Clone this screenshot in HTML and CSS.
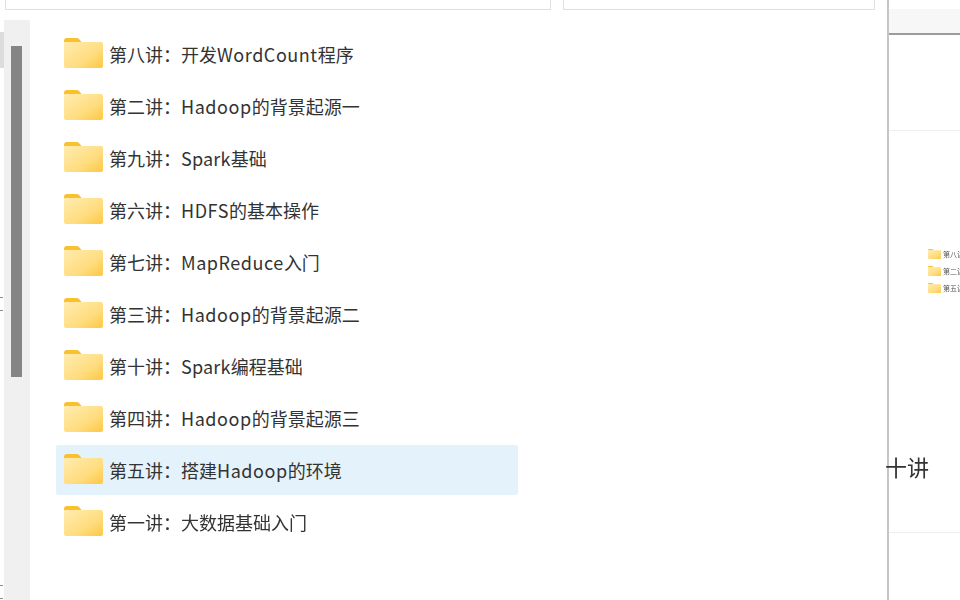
FILE: index.html
```html
<!DOCTYPE html>
<html lang="zh-CN">
<head>
<meta charset="utf-8">
<title>文件列表</title>
<link rel="stylesheet" href="styles.css">
</head>
<body>
<svg class="defs" width="0" height="0" aria-hidden="true">
  <defs>
    <linearGradient id="fb" x1="0" y1="0" x2="1" y2="1">
      <stop offset="0" stop-color="#ffecb0"/>
      <stop offset="0.6" stop-color="#ffdd80"/>
      <stop offset="1" stop-color="#fcc844"/>
    </linearGradient>
    <symbol id="folder" viewBox="0 0 39 30">
      <path d="M0 3a3 3 0 0 1 3-3h9.500a4 4 0 0 1 2.800 1.200L18 4.500H0z" fill="#fbc02e"/>
      <rect x="0" y="4" width="39" height="26" rx="2" fill="url(#fb)"/>
    </symbol>
  </defs>
</svg>
<div class="screen">
  <main class="explorer">
    <div class="fields">
      <div class="field field-path"></div>
      <div class="field field-search"></div>
    </div>
    <div class="body">
      <div class="edge">
        <div class="edge-tab"></div>
        <div class="tick tick-a"></div>
        <div class="tick tick-b"></div>
        <div class="tick tick-c"></div>
        <div class="tick tick-d"></div>
      </div>
      <div class="gutter"><div class="thumb"></div></div>
      <ul class="list">
        <li class="row"><svg class="icon"><use href="#folder"/></svg><span>第八讲：开发<b class="lat">WordCount</b>程序</span></li>
        <li class="row"><svg class="icon"><use href="#folder"/></svg><span>第二讲：<b class="lat">Hadoop</b>的背景起源一</span></li>
        <li class="row"><svg class="icon"><use href="#folder"/></svg><span>第九讲：<b class="lat-s">Spark</b>基础</span></li>
        <li class="row"><svg class="icon"><use href="#folder"/></svg><span>第六讲：<b class="lat">HDFS</b>的基本操作</span></li>
        <li class="row"><svg class="icon"><use href="#folder"/></svg><span>第七讲：<b class="lat">MapReduce</b>入门</span></li>
        <li class="row"><svg class="icon"><use href="#folder"/></svg><span>第三讲：<b class="lat">Hadoop</b>的背景起源二</span></li>
        <li class="row"><svg class="icon"><use href="#folder"/></svg><span>第十讲：<b class="lat-s">Spark</b>编程基础</span></li>
        <li class="row"><svg class="icon"><use href="#folder"/></svg><span>第四讲：<b class="lat">Hadoop</b>的背景起源三</span></li>
        <li class="row selected"><svg class="icon"><use href="#folder"/></svg><span>第五讲：搭建<b class="lat">Hadoop</b>的环境</span></li>
        <li class="row"><svg class="icon"><use href="#folder"/></svg><span>第一讲：大数据基础入门</span></li>
      </ul>
    </div>
  </main>
  <aside class="behind">
    <div class="behind-top"></div>
    <div class="behind-head"></div>
    <div class="behind-main">
      <div class="mini-list">
        <div class="mini-row"><svg class="mini-icon"><use href="#folder"/></svg><span>第八讲</span></div>
        <div class="mini-row"><svg class="mini-icon"><use href="#folder"/></svg><span>第二讲</span></div>
        <div class="mini-row"><svg class="mini-icon"><use href="#folder"/></svg><span>第五讲</span></div>
      </div>
      <div class="big-text">十讲</div>
    </div>
  </aside>
</div>
</body>
</html>
```
FILE: styles.css
```css
* { box-sizing: border-box; }
html, body { margin: 0; padding: 0; background: #fff; }
body { width: 960px; height: 600px; overflow: hidden; font-family: "Noto Sans CJK SC", sans-serif; color: #333; }
.defs { display: block; height: 0; }
.screen { display: flex; width: 960px; height: 600px; overflow: hidden; filter: blur(0.5px); }

.explorer { width: 889px; flex: none; height: 600px; border-right: 2px solid #c6c6c6; background: #fff; }
.fields { display: flex; height: 10px; padding-left: 5px; gap: 12px; }
.field { height: 10px; background: #fff; border: 1px solid #dfdfdf; border-top: 0; }
.field-path { width: 546px; }
.field-search { width: 312px; }

.body { display: flex; height: 590px; }
.edge { width: 4px; flex: none; position: relative; }
.edge-tab { width: 4px; height: 36px; margin-top: 22px; background: #dcdcdc; }
.tick { position: absolute; left: 0; width: 3px; height: 1px; background: #8a8a8a; }
.tick-a { top: 287px; }
.tick-b { top: 300px; }
.tick-c { top: 575px; }
.tick-d { top: 588px; }
.gutter { width: 26px; flex: none; margin-top: 10px; padding: 26px 0 0 7px; background: #f0f0f0; }
.thumb { width: 11px; height: 331px; background: #858585; }

.list { list-style: none; margin: 0 0 0 26px; padding: 19px 0 0; width: 462px; display: flex; flex-direction: column; gap: 2px; }
.row { height: 50px; display: flex; align-items: center; padding-left: 8px; gap: 6px; font-size: 18px; line-height: 26px; border-radius: 2px; white-space: nowrap; }
.lat { font-weight: 400; letter-spacing: 0.55px; }
.lat-s { font-weight: 400; letter-spacing: 0.2px; }
.selected { background: #e4f2fb; }
.icon { width: 39px; height: 30px; flex: none; margin-top: -3px; }

.behind { flex: 1; min-width: 0; display: flex; flex-direction: column; }
.behind-top { height: 9px; }
.behind-head { height: 26px; background: #f7f7f7; border-bottom: 2px solid #9b9b9b; }
.behind-main { margin-top: 95px; height: 403px; border-top: 1px solid #eeeeee; border-bottom: 1px solid #eeeeee; display: flex; flex-direction: column; }
.mini-list { margin: 118px 0 0 39px; display: flex; flex-direction: column; gap: 7px; }
.mini-row { display: flex; align-items: center; gap: 2px; height: 10px; font-size: 7px; line-height: 10px; white-space: nowrap; color: #555; }
.mini-icon { width: 13px; height: 10px; flex: none; }
.big-text { margin: 158px 0 0 -4px; font-size: 22px; line-height: 30px; color: #333; white-space: nowrap; }
```
